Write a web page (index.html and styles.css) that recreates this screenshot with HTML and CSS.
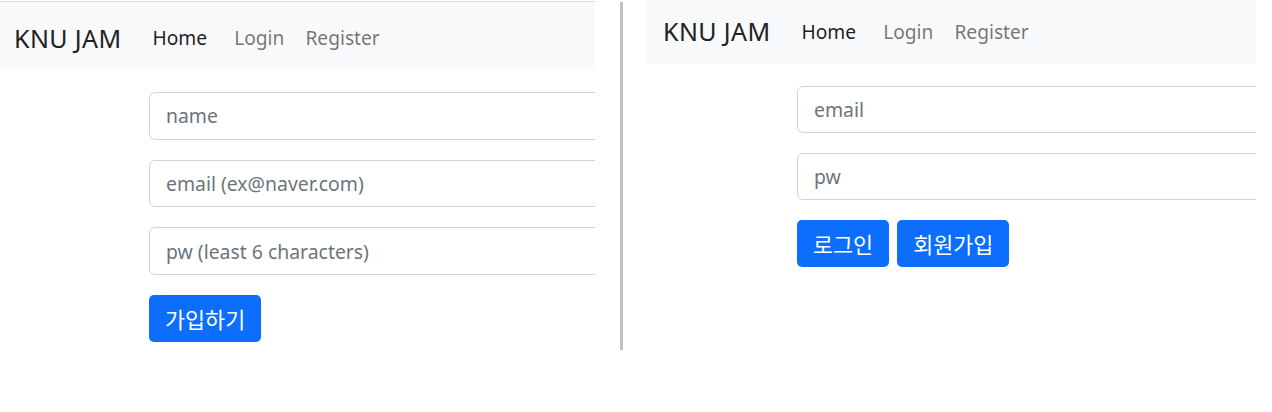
FILE: index.html
```html
<!DOCTYPE html>
<html lang="ko">
<head>
    <meta charset="UTF-8">
    <meta name="viewport" content="width=device-width, initial-scale=1.0">
    <title>KNU JAM</title>
    <link rel="stylesheet" href="styles.css">
</head>
<body>

<div class="panel panel-left">
    <nav class="navbar">
        <span class="brand">KNU JAM</span>
        <a class="nav-link active" href="#">Home</a>
        <a class="nav-link" href="#">Login</a>
        <a class="nav-link" href="#">Register</a>
    </nav>
    <div class="form">
        <input class="input" type="text" placeholder="name">
        <input class="input" type="text" placeholder="email (ex@naver.com)">
        <input class="input" type="password" placeholder="pw (least 6 characters)">
        <div class="buttons">
            <button class="btn">가입하기</button>
        </div>
    </div>
</div>

<div class="divider"></div>

<div class="panel panel-right">
    <nav class="navbar">
        <span class="brand">KNU JAM</span>
        <a class="nav-link active" href="#">Home</a>
        <a class="nav-link" href="#">Login</a>
        <a class="nav-link" href="#">Register</a>
    </nav>
    <div class="form">
        <input class="input" type="text" placeholder="email">
        <input class="input" type="password" placeholder="pw">
        <div class="buttons">
            <button class="btn">로그인</button>
            <button class="btn">회원가입</button>
        </div>
    </div>
</div>

</body>
</html>
```

FILE: styles.css
```css
body {
    font-family: "Noto Sans", "Noto Sans CJK KR", sans-serif;
    background-color: #fff;
    margin: 0;
    display: flex;
    align-items: flex-start;
}
.panel {
    overflow: hidden;
    flex-shrink: 0;
}
.panel-left {
    width: 595px;
    margin-top: 1px;
    border-top: 1px solid #dedede;
}
.panel-right {
    width: 609px;
    margin-left: 24px;
}
.divider {
    width: 3px;
    height: 348px;
    margin-top: 2px;
    margin-left: 25px;
    background-color: #c2c2c2;
    flex-shrink: 0;
}
.navbar {
    box-sizing: border-box;
    display: flex;
    align-items: center;
    background-color: #f8f9fa;
    height: 69px;
    padding-left: 14px;
    padding-top: 2px;
}
.panel-right .navbar {
    height: 64px;
    padding-left: 16px;
    padding-top: 0;
    padding-bottom: 2px;
}
.brand {
    font-size: 25px;
    letter-spacing: 0.4px;
    color: #212121;
    margin-right: 31px;
}
.nav-link {
    font-size: 19.2px;
    color: rgba(0, 0, 0, 0.55);
    text-decoration: none;
    margin-right: 21px;
}
.nav-link.active {
    color: rgba(0, 0, 0, 0.9);
    margin-right: 27px;
}
.form {
    padding-left: 149px;
    padding-top: 21px;
    display: flex;
    flex-direction: column;
    align-items: flex-start;
}
.panel-right .form {
    padding-left: 150px;
    padding-top: 22px;
}
.input {
    box-sizing: border-box;
    width: 700px;
    height: 47.7px;
    margin: 0 0 20px 0;
    padding: 0 16px;
    font-family: inherit;
    font-size: 19.4px;
    color: #212529;
    border: 1px solid #ced4da;
    border-radius: 6px;
    background: #fff;
}
.panel-right .input {
    height: 47px;
}
.input::placeholder {
    color: #6c757d;
}
.buttons {
    display: flex;
    gap: 8px;
}
.btn {
    font-family: inherit;
    font-size: 21.8px;
    color: #fff;
    background-color: #0d6efd;
    border: none;
    border-radius: 5px;
    height: 47px;
    padding: 0 16px;
    cursor: pointer;
}
```
